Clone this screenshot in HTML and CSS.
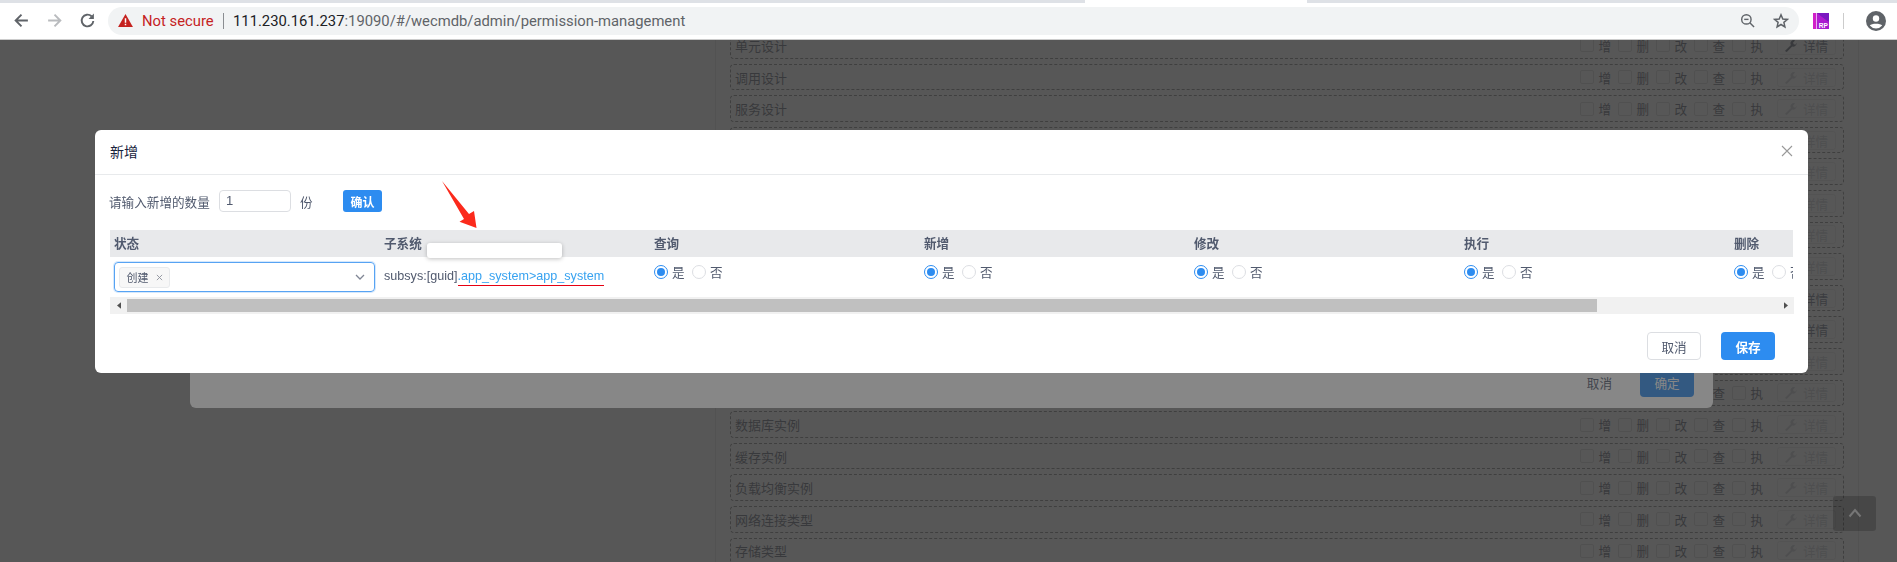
FILE: index.html
```html
<!DOCTYPE html>
<html lang="zh">
<head>
<meta charset="utf-8">
<title>权限管理</title>
<link rel="stylesheet" href="styles.css">
</head>
<body>
<header class="chrome">
  <div class="tabstrip"><span class="tab-gap"></span></div>
  <div class="toolbar">
    <svg class="nav" viewBox="0 0 16 16"><path d="M14 8H3M8 2.5 2.5 8 8 13.500" fill="none" stroke="#5f6368" stroke-width="1.800"/></svg>
    <svg class="nav" viewBox="0 0 16 16"><path d="M2 8h11M8 2.500 13.500 8 8 13.500" fill="none" stroke="#b9bbbe" stroke-width="1.800"/></svg>
    <svg class="nav" viewBox="0 0 16 16"><path d="M13.500 8.500A5.500 5.500 0 1 1 11.800 4" fill="none" stroke="#5f6368" stroke-width="1.800"/><path d="M14 1.500V6.500H9Z" fill="#5f6368"/></svg>
    <div class="omnibox">
      <svg class="warn" viewBox="0 0 16 14"><path d="M8 0 16 14H0Z" fill="#c5221f"/><path d="M7.200 4.500h1.600v5H7.200zM7.200 10.500h1.600v1.600H7.200z" fill="#fff"/></svg>
      <span class="insecure">Not secure</span>
      <span class="bar"></span>
      <span class="url"><b>111.230.161.237</b>:19090/#/wecmdb/admin/permission-management</span>
      <span class="omni-space"></span>
      <svg class="omni-ico" viewBox="0 0 16 16"><circle cx="6.800" cy="6.800" r="5" fill="none" stroke="#5f6368" stroke-width="1.500"/><path d="M10.500 10.500 15 15" stroke="#5f6368" stroke-width="1.500"/><path d="M4.500 6.800h4.600" stroke="#5f6368" stroke-width="1.500"/></svg>
      <svg class="omni-ico star" viewBox="0 0 16 16"><path d="M8 1.800 9.800 6l4.600.4-3.500 3 1 4.500L8 11.500l-3.900 2.400 1-4.500-3.500-3L6.200 6Z" fill="none" stroke="#5f6368" stroke-width="1.500"/></svg>
    </div>
    <svg class="rp" viewBox="0 0 16 16"><rect width="16" height="16" fill="#b01ad0"/><path d="M4 0H16V9Z" fill="#8c12b8"/><path d="M4 0 16 9V0Z" fill="#7a18c0"/><rect width="3" height="16" fill="#d020c8"/><rect x="3" width=".8" height="16" fill="#f6d4fa"/><rect x="5" y="8.500" width="11" height="7.500" fill="#a81cd0"/><text x="5.800" y="14.800" class="rp-text">RP</text></svg>
    <span class="tool-sep"></span>
    <svg class="profile" viewBox="0 0 20 20"><circle cx="10" cy="10" r="10" fill="#5f6368"/><circle cx="10" cy="7.500" r="3.200" fill="#fff"/><path d="M3.800 14.500c1.600-2.200 10.800-2.200 12.400 0a8 8 0 0 1-12.400 0Z" fill="#fff"/></svg>
  </div>
</header>

<main class="page">
  <section class="card">
    <div class="row"><span class="row-name">单元设计</span><span class="perm"><i></i>增</span><span class="perm"><i></i>删</span><span class="perm"><i></i>改</span><span class="perm"><i></i>查</span><span class="perm"><i></i>执</span><span class="detail on"><svg viewBox="0 0 14 14"><path d="M1 13 7.500 6.500A3.500 3.500 0 0 1 12 1.500L9.800 3.700l.6 1.900 1.900.6L13.500 4A3.800 3.800 0 0 1 8.800 8.200L3 14Z"/></svg>详情</span></div>
    <div class="row"><span class="row-name">调用设计</span><span class="perm"><i></i>增</span><span class="perm"><i></i>删</span><span class="perm"><i></i>改</span><span class="perm"><i></i>查</span><span class="perm"><i></i>执</span><span class="detail"><svg viewBox="0 0 14 14"><path d="M1 13 7.500 6.500A3.500 3.500 0 0 1 12 1.500L9.800 3.700l.6 1.900 1.900.6L13.500 4A3.800 3.800 0 0 1 8.800 8.200L3 14Z"/></svg>详情</span></div>
    <div class="row"><span class="row-name">服务设计</span><span class="perm"><i></i>增</span><span class="perm"><i></i>删</span><span class="perm"><i></i>改</span><span class="perm"><i></i>查</span><span class="perm"><i></i>执</span><span class="detail"><svg viewBox="0 0 14 14"><path d="M1 13 7.500 6.500A3.500 3.500 0 0 1 12 1.500L9.800 3.700l.6 1.900 1.900.6L13.500 4A3.800 3.800 0 0 1 8.800 8.200L3 14Z"/></svg>详情</span></div>
    <div class="row"><span class="row-name">部署设计</span><span class="perm"><i></i>增</span><span class="perm"><i></i>删</span><span class="perm"><i></i>改</span><span class="perm"><i></i>查</span><span class="perm"><i></i>执</span><span class="detail"><svg viewBox="0 0 14 14"><path d="M1 13 7.500 6.500A3.500 3.500 0 0 1 12 1.500L9.800 3.700l.6 1.900 1.900.6L13.500 4A3.800 3.800 0 0 1 8.800 8.200L3 14Z"/></svg>详情</span></div>
    <div class="row"><span class="row-name">网络设计</span><span class="perm"><i></i>增</span><span class="perm"><i></i>删</span><span class="perm"><i></i>改</span><span class="perm"><i></i>查</span><span class="perm"><i></i>执</span><span class="detail"><svg viewBox="0 0 14 14"><path d="M1 13 7.500 6.500A3.500 3.500 0 0 1 12 1.500L9.800 3.700l.6 1.900 1.900.6L13.500 4A3.800 3.800 0 0 1 8.800 8.200L3 14Z"/></svg>详情</span></div>
    <div class="row"><span class="row-name">子系统</span><span class="perm"><i></i>增</span><span class="perm"><i></i>删</span><span class="perm"><i></i>改</span><span class="perm"><i></i>查</span><span class="perm"><i></i>执</span><span class="detail"><svg viewBox="0 0 14 14"><path d="M1 13 7.500 6.500A3.500 3.500 0 0 1 12 1.500L9.800 3.700l.6 1.900 1.900.6L13.500 4A3.800 3.800 0 0 1 8.800 8.200L3 14Z"/></svg>详情</span></div>
    <div class="row"><span class="row-name">单元</span><span class="perm"><i></i>增</span><span class="perm"><i></i>删</span><span class="perm"><i></i>改</span><span class="perm"><i></i>查</span><span class="perm"><i></i>执</span><span class="detail"><svg viewBox="0 0 14 14"><path d="M1 13 7.500 6.500A3.500 3.500 0 0 1 12 1.500L9.800 3.700l.6 1.900 1.900.6L13.500 4A3.800 3.800 0 0 1 8.800 8.200L3 14Z"/></svg>详情</span></div>
    <div class="row"><span class="row-name">服务</span><span class="perm"><i></i>增</span><span class="perm"><i></i>删</span><span class="perm"><i></i>改</span><span class="perm"><i></i>查</span><span class="perm"><i></i>执</span><span class="detail"><svg viewBox="0 0 14 14"><path d="M1 13 7.500 6.500A3.500 3.500 0 0 1 12 1.500L9.800 3.700l.6 1.900 1.900.6L13.500 4A3.800 3.800 0 0 1 8.800 8.200L3 14Z"/></svg>详情</span></div>
    <div class="row"><span class="row-name">部署</span><span class="perm"><i></i>增</span><span class="perm"><i></i>删</span><span class="perm"><i></i>改</span><span class="perm"><i></i>查</span><span class="perm"><i></i>执</span><span class="detail on"><svg viewBox="0 0 14 14"><path d="M1 13 7.500 6.500A3.500 3.500 0 0 1 12 1.500L9.800 3.700l.6 1.900 1.900.6L13.500 4A3.800 3.800 0 0 1 8.800 8.200L3 14Z"/></svg>详情</span></div>
    <div class="row"><span class="row-name">主机</span><span class="perm"><i></i>增</span><span class="perm"><i></i>删</span><span class="perm"><i></i>改</span><span class="perm"><i></i>查</span><span class="perm"><i></i>执</span><span class="detail on"><svg viewBox="0 0 14 14"><path d="M1 13 7.500 6.500A3.500 3.500 0 0 1 12 1.500L9.800 3.700l.6 1.900 1.900.6L13.500 4A3.800 3.800 0 0 1 8.800 8.200L3 14Z"/></svg>详情</span></div>
    <div class="row"><span class="row-name">资源实例</span><span class="perm"><i></i>增</span><span class="perm"><i></i>删</span><span class="perm"><i></i>改</span><span class="perm"><i></i>查</span><span class="perm"><i></i>执</span><span class="detail"><svg viewBox="0 0 14 14"><path d="M1 13 7.500 6.500A3.500 3.500 0 0 1 12 1.500L9.800 3.700l.6 1.900 1.900.6L13.500 4A3.800 3.800 0 0 1 8.800 8.200L3 14Z"/></svg>详情</span></div>
    <div class="row"><span class="row-name">应用实例</span><span class="perm"><i></i>增</span><span class="perm"><i></i>删</span><span class="perm"><i></i>改</span><span class="perm"><i></i>查</span><span class="perm"><i></i>执</span><span class="detail"><svg viewBox="0 0 14 14"><path d="M1 13 7.500 6.500A3.500 3.500 0 0 1 12 1.500L9.800 3.700l.6 1.900 1.900.6L13.500 4A3.800 3.800 0 0 1 8.800 8.200L3 14Z"/></svg>详情</span></div>
    <div class="row"><span class="row-name">数据库实例</span><span class="perm"><i></i>增</span><span class="perm"><i></i>删</span><span class="perm"><i></i>改</span><span class="perm"><i></i>查</span><span class="perm"><i></i>执</span><span class="detail"><svg viewBox="0 0 14 14"><path d="M1 13 7.500 6.500A3.500 3.500 0 0 1 12 1.500L9.800 3.700l.6 1.900 1.900.6L13.500 4A3.800 3.800 0 0 1 8.800 8.200L3 14Z"/></svg>详情</span></div>
    <div class="row"><span class="row-name">缓存实例</span><span class="perm"><i></i>增</span><span class="perm"><i></i>删</span><span class="perm"><i></i>改</span><span class="perm"><i></i>查</span><span class="perm"><i></i>执</span><span class="detail"><svg viewBox="0 0 14 14"><path d="M1 13 7.500 6.500A3.500 3.500 0 0 1 12 1.500L9.800 3.700l.6 1.900 1.900.6L13.500 4A3.800 3.800 0 0 1 8.800 8.200L3 14Z"/></svg>详情</span></div>
    <div class="row"><span class="row-name">负载均衡实例</span><span class="perm"><i></i>增</span><span class="perm"><i></i>删</span><span class="perm"><i></i>改</span><span class="perm"><i></i>查</span><span class="perm"><i></i>执</span><span class="detail"><svg viewBox="0 0 14 14"><path d="M1 13 7.500 6.500A3.500 3.500 0 0 1 12 1.500L9.800 3.700l.6 1.900 1.900.6L13.500 4A3.800 3.800 0 0 1 8.800 8.200L3 14Z"/></svg>详情</span></div>
    <div class="row"><span class="row-name">网络连接类型</span><span class="perm"><i></i>增</span><span class="perm"><i></i>删</span><span class="perm"><i></i>改</span><span class="perm"><i></i>查</span><span class="perm"><i></i>执</span><span class="detail"><svg viewBox="0 0 14 14"><path d="M1 13 7.500 6.500A3.500 3.500 0 0 1 12 1.500L9.800 3.700l.6 1.900 1.900.6L13.500 4A3.800 3.800 0 0 1 8.800 8.200L3 14Z"/></svg>详情</span></div>
    <div class="row"><span class="row-name">存储类型</span><span class="perm"><i></i>增</span><span class="perm"><i></i>删</span><span class="perm"><i></i>改</span><span class="perm"><i></i>查</span><span class="perm"><i></i>执</span><span class="detail"><svg viewBox="0 0 14 14"><path d="M1 13 7.500 6.500A3.500 3.500 0 0 1 12 1.500L9.800 3.700l.6 1.900 1.900.6L13.500 4A3.800 3.800 0 0 1 8.800 8.200L3 14Z"/></svg>详情</span></div>
  </section>
  <div class="back-top"><svg viewBox="0 0 14 10"><path d="M1.500 8.500 7 2l5.500 6.500" fill="none" stroke="#767676" stroke-width="2"/></svg></div>
</main>

<div class="mask"></div>
<div class="back-dialog">
  <div class="back-footer"><span class="back-cancel">取消</span><span class="back-ok">确定</span></div>
</div>
<div class="mask"></div>

<div class="dialog">
  <div class="dialog-head"><span>新增</span><svg class="close" viewBox="0 0 12 12"><path d="M1 1l10 10M11 1 1 11" stroke="#999" stroke-width="1.100"/></svg></div>
  <div class="dialog-body">
    <div class="qty-row">
      <span class="qty-label">请输入新增的数量</span>
      <span class="qty-input">1</span>
      <span class="qty-unit">份</span>
      <span class="btn-confirm">确认</span>
    </div>
    <div class="table-wrap">
      <div class="grid">
        <div class="th">状态</div><div class="th">子系统</div><div class="th">查询</div><div class="th">新增</div><div class="th">修改</div><div class="th">执行</div><div class="th">删除</div>
        <div class="td"><div class="select"><span class="tag">创建<svg viewBox="0 0 8 8"><path d="M1 1l6 6M7 1 1 7" stroke="#8a8f99" stroke-width="1"/></svg></span><svg class="caret" viewBox="0 0 10 6"><path d="M1 1l4 4 4-4" fill="none" stroke="#808695" stroke-width="1.300"/></svg></div></div>
        <div class="td path"><span>subsys:[guid]</span><span class="path-link">.app_system&gt;app_system</span></div>
        <div class="td"><span class="radio on"></span><span class="rlabel">是</span><span class="radio"></span><span class="rlabel">否</span></div>
        <div class="td"><span class="radio on"></span><span class="rlabel">是</span><span class="radio"></span><span class="rlabel">否</span></div>
        <div class="td"><span class="radio on"></span><span class="rlabel">是</span><span class="radio"></span><span class="rlabel">否</span></div>
        <div class="td"><span class="radio on"></span><span class="rlabel">是</span><span class="radio"></span><span class="rlabel">否</span></div>
        <div class="td"><span class="radio on"></span><span class="rlabel">是</span><span class="radio"></span><span class="rlabel">否</span></div>
      </div>
      <div class="tip"></div>
      <svg class="annot" viewBox="0 0 36 48"><path d="M1 0 28 33 33 30 35.500 47 18.500 40.700 23 38Z" fill="#fb2a1c"/></svg>
    </div>
    <div class="hscroll">
      <span class="sb-btn"><svg viewBox="0 0 5 8"><path d="M5 0V8L0 4Z" fill="#505050"/></svg></span>
      <div class="sb-track"><div class="sb-thumb"></div></div>
      <span class="sb-btn"><svg viewBox="0 0 5 8"><path d="M0 0V8L5 4Z" fill="#505050"/></svg></span>
    </div>
  </div>
  <div class="dialog-foot"><span class="btn-cancel">取消</span><span class="btn-save">保存</span></div>
</div>
</body>
</html>
```
FILE: styles.css
```css
* { box-sizing: border-box; }
html, body { margin: 0; height: 562px; overflow: hidden; background: #fff; }
body { font-family: "Liberation Sans", "Noto Sans CJK SC", sans-serif; font-size: 12.6px; color: #515a6e; }

.chrome { position: relative; z-index: 20; background: #fff; }
.tabstrip { height: 3px; background: #dee1e6; display: flex; padding-left: 1085px; }
.tab-gap { width: 222px; background: #fff; }
.toolbar { height: 36.500px; display: flex; align-items: center; padding: 0 0 0 13px; border-bottom: 1px solid #ccc; }
.nav { width: 17px; height: 17px; margin-right: 16px; flex: none; }
.omnibox { margin-left: -4px; width: 1691px; height: 28px; border-radius: 14px; background: #f1f3f4; display: flex; align-items: center; padding-left: 10px; font-family: Roboto, sans-serif; font-size: 14.8px; flex: none; }
.warn { width: 15px; height: 13px; flex: none; }
.insecure { color: #c5221f; margin-left: 9px; width: 72px; white-space: nowrap; }
.bar { width: 1px; height: 16px; background: #8a8d91; margin: 0 9px 0 9px; }
.url { color: #5f6368; white-space: nowrap; }
.url b { color: #202124; font-weight: 400; }
.omni-space { flex: 1; }
.omni-ico { width: 15px; height: 15px; flex: none; }
.star { margin: 0 10px 0 18px; width: 16px; height: 16px; }
.rp { width: 16px; height: 16px; margin-left: 14px; flex: none; }
.rp-text { font: 700 6.500px "Liberation Sans", sans-serif; fill: #fff; }
.tool-sep { width: 1px; height: 16px; background: #ccc; margin: 0 22px 0 14px; }
.profile { width: 20px; height: 20px; flex: none; }

.page { position: relative; height: 522px; overflow: hidden; }
.card { margin: -7.400px 38px 0 715px; padding: 0 14.500px 0 14px; border-left: 1px solid #e1e1e1; border-right: 1px solid #e1e1e1; display: flex; flex-direction: column; gap: 5px; height: 620px; }
.row { height: 26.600px; flex: none; border: 1px dashed #6a6a6a; border-radius: 4px; display: flex; align-items: center; padding: 0 7px 0 4px; color: #3f4656; white-space: nowrap; }
.row-name { margin-right: auto; font-size: 13px; }
.perm { width: 38px; display: flex; align-items: center; gap: 5px; flex: none; }
.perm i { width: 14px; height: 14px; border: 1px solid #d4d4d4; border-radius: 2px; flex: none; }
.detail { margin-left: 7px; width: 59px; height: 19px; border: 1px solid #e4e4e4; border-radius: 3px; color: #c5c8ce; display: flex; align-items: center; justify-content: center; gap: 6px; flex: none; }
.detail svg { width: 13px; height: 13px; fill: #c5c8ce; }
.detail.on { color: #515a6e; }
.detail.on svg { fill: #3f4656; }
.back-top { position: absolute; z-index: 5; left: 1833px; top: 456px; width: 43px; height: 35px; border-radius: 3px; background: rgba(0, 0, 0, .18); display: flex; align-items: center; justify-content: center; }
.back-top svg { width: 14px; height: 10px; }

.mask { position: fixed; inset: 0; top: 39px; background: rgba(55, 55, 55, .6); }
.back-dialog { position: fixed; left: 190px; top: 140px; width: 1523px; height: 268px; background: #fff; border-radius: 0 0 6px 6px; display: flex; align-items: flex-end; }
.back-footer { width: 100%; display: flex; justify-content: flex-end; align-items: center; padding: 0 19px 11px 0; }
.back-cancel { margin-right: 28px; }
.back-ok { width: 54px; height: 30px; background: #2d8cf0; color: #fff; border-radius: 4px; display: flex; align-items: center; justify-content: center; }

.dialog { position: fixed; z-index: 6; left: 95px; top: 130px; width: 1713px; height: 243px; background: #fff; border-radius: 6px; display: flex; flex-direction: column; }
.dialog-head { height: 45px; flex: none; border-bottom: 1px solid #e8eaec; display: flex; align-items: center; justify-content: space-between; padding: 0 15px 2px 15px; color: #17233d; font-size: 14px; font-weight: 400; }
.close { width: 12px; height: 12px; margin-bottom: 1px; }
.dialog-body { padding: 15px 14px 0 15px; flex: 1; }
.qty-row { display: flex; align-items: center; height: 22px; }
.qty-label { width: 110px; margin-left: -1px; flex: none; white-space: nowrap; }
.qty-input { width: 72px; height: 22px; border: 1px solid #dcdee2; border-radius: 4px; padding-left: 6px; line-height: 20px; font-size: 13px; flex: none; }
.qty-unit { margin-left: 9px; width: 43px; flex: none; }
.btn-confirm { width: 39px; height: 22px; background: #2d8cf0; color: #fff; border-radius: 3px; display: flex; align-items: center; justify-content: center; font-weight: 700; font-size: 12px; }
.table-wrap { position: relative; margin-top: 18px; height: 67px; width: 1683px; }
.grid { display: grid; grid-template-columns: repeat(7, 270px); grid-template-rows: 27px 40px; width: 1683px; overflow: hidden; }
.th { background: #e8e9eb; padding: 0 4px 2px; display: flex; align-items: center; font-weight: 700; font-size: 12.600px; color: #515a6e; }
.td { padding: 5px 4px 0; display: flex; align-items: flex-start; white-space: nowrap; }
.select { width: 261px; height: 30px; border: 1px solid #57a3f3; border-radius: 4px; box-shadow: 0 0 0 1px rgba(45, 140, 240, .2); display: flex; align-items: center; padding: 0 9px 0 4px; justify-content: space-between; }
.tag { width: 51px; height: 21px; background: #f7f7f7; border: 1px solid #e8eaec; border-radius: 3px; display: flex; align-items: center; justify-content: center; gap: 7px; font-size: 11px; }
.tag svg { width: 7px; height: 7px; }
.caret { width: 10px; height: 6px; }
.path { padding-top: 11px; line-height: 16px; display: block; }
.path-link { color: #37a2f0; border-bottom: 1.500px solid #e60012; display: inline-block; line-height: 15px; height: 17px; }
.td .radio { margin-top: 3px; }
.radio { width: 14px; height: 14px; border-radius: 50%; border: 1px solid #dcdee2; background: #fff; flex: none; position: relative; }
.radio.on { border-color: #2d8cf0; }
.radio.on::after { content: ""; position: absolute; inset: 2px; border-radius: 50%; background: #2d8cf0; }
.rlabel { margin: 0 7px 0 4px; width: 13px; }
.tip { position: absolute; left: 317px; top: 13px; width: 135px; height: 15px; background: #fff; border-radius: 3px; box-shadow: 0 1px 4px rgba(0, 0, 0, .25); }
.annot { position: absolute; left: 331px; top: -49px; width: 36px; height: 48px; }
.hscroll { height: 17px; width: 1684px; display: flex; background: #f1f1f1; }
.sb-btn { width: 17px; display: flex; align-items: center; justify-content: center; flex: none; }
.sb-btn svg { width: 4px; height: 7px; }
.sb-track { flex: 1; padding: 2px 0; }
.sb-thumb { width: 1470px; height: 13px; background: #c0c0c0; }
.dialog-foot { flex: none; height: 41px; padding: 0 33px 13px 0; display: flex; justify-content: flex-end; gap: 20px; }
.btn-cancel, .btn-save { width: 54px; height: 28px; border-radius: 4px; display: flex; align-items: center; justify-content: center; }
.btn-cancel { border: 1px solid #dcdee2; }
.btn-save { background: #2d8cf0; color: #fff; font-weight: 700; }
```
